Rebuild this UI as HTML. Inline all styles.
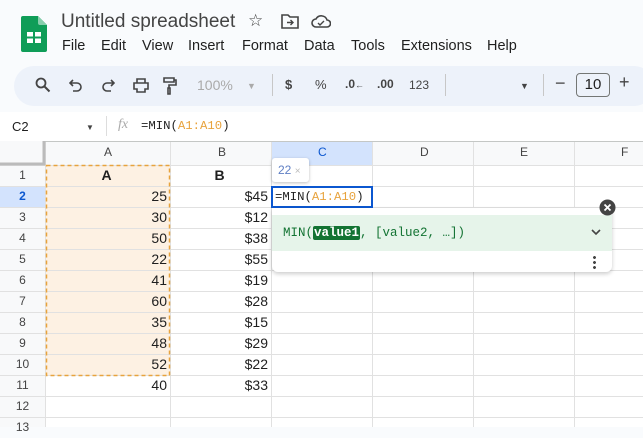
<!DOCTYPE html>
<html><head><style>
*{box-sizing:border-box;margin:0;padding:0}
body{width:643px;height:427px;overflow:hidden;background:#f9fbfd;font-family:"Liberation Sans",Arial,sans-serif;position:relative;color:#1f1f1f}
.a{position:absolute}
.menu span{position:absolute;top:0}
.tb{left:14px;top:66px;width:640px;height:40px;background:#edf2fa;border-radius:20px}
.ti{position:absolute;top:77px;font-size:14px;color:#444}
.grid{left:0;top:141px;width:643px;height:286px;background:#fff}
.mono{font-family:"Liberation Mono",monospace}
</style></head><body>
<svg class="a" style="left:21px;top:16px" width="26" height="36" viewBox="0 0 26 36"><path d="M2 0h15l9 9v25a2 2 0 0 1-2 2H2a2 2 0 0 1-2-2V2a2 2 0 0 1 2-2z" fill="#0f9d58"/><path d="M17 0l9 9h-7a2 2 0 0 1-2-2z" fill="#87ceac"/><rect x="6" y="16" width="14" height="11" fill="#fff"/><path d="M6 21.5h14M13 16v11" stroke="#0f9d58" stroke-width="2"/></svg>
<div class="a" style="left:61px;top:11px;font-size:19px;color:#444">Untitled spreadsheet</div>
<div class="a" style="left:248px;top:11px;font-size:17px;color:#444">☆</div>
<svg class="a" style="left:281px;top:14px" width="18" height="15" viewBox="0 0 18 15"><path d="M1 1h6l2 2h8v11H1z" fill="none" stroke="#444" stroke-width="1.6"/><path d="M6 8.5h6M9.5 6l2.5 2.5L9.5 11" fill="none" stroke="#444" stroke-width="1.4"/></svg>
<svg class="a" style="left:311px;top:14px" width="20" height="15" viewBox="0 0 20 15"><path d="M5 13a4 4 0 0 1 0-8 6 6 0 0 1 11 1 3.5 3.5 0 0 1 0 7z" fill="none" stroke="#444" stroke-width="1.6"/><path d="M7 9l2 2 4-4" fill="none" stroke="#444" stroke-width="1.4"/></svg>
<div class="a menu" style="left:0;top:38px;font-size:14.5px;color:#1f1f1f;white-space:nowrap"><span style="left:62px">File</span><span style="left:101px">Edit</span><span style="left:142px">View</span><span style="left:188px">Insert</span><span style="left:242px">Format</span><span style="left:304px">Data</span><span style="left:351px">Tools</span><span style="left:401px">Extensions</span><span style="left:487px">Help</span></div>
<div class="a tb"></div>
<svg class="a" style="left:35px;top:77px" width="16" height="16" viewBox="0 0 16 16"><circle cx="6" cy="6" r="4.5" fill="none" stroke="#444" stroke-width="1.8"/><path d="M9.5 9.5l5 5" stroke="#444" stroke-width="2"/></svg>
<svg class="a" style="left:69px;top:79px" width="14" height="14" viewBox="0 0 14 14"><path d="M4 1L1 4l3 3M1 4h7a4 4 0 0 1 0 8H4" fill="none" stroke="#444" stroke-width="1.6"/></svg>
<svg class="a" style="left:101px;top:79px" width="14" height="14" viewBox="0 0 14 14"><path d="M10 1l3 3-3 3M13 4H6a4 4 0 0 0 0 8h4" fill="none" stroke="#444" stroke-width="1.6"/></svg>
<svg class="a" style="left:133px;top:78px" width="16" height="15" viewBox="0 0 16 15"><path d="M4 1h8v4H4zM1 5h14v6h-3v3H4v-3H1z" fill="none" stroke="#444" stroke-width="1.6"/></svg>
<svg class="a" style="left:163px;top:77px" width="14" height="18" viewBox="0 0 14 18"><path d="M1 1h10v4H1zM11 3h2v5H6v3M5 11h2v6H5z" fill="none" stroke="#444" stroke-width="1.6"/></svg>
<div class="ti" style="left:197px;color:#aaa">100%</div><div class="ti" style="left:247px;color:#aaa;font-size:9px;top:81px">▼</div>
<div class="a" style="left:272px;top:74px;width:1px;height:22px;background:#c7c7c7"></div>
<div class="ti" style="left:285px;font-weight:bold;font-size:13px">$</div>
<div class="ti" style="left:315px;font-size:13px">%</div>
<div class="ti" style="left:345px;font-size:12px;font-weight:bold">.0<span style="font-size:9px">←</span></div>
<div class="ti" style="left:377px;font-size:12px;font-weight:bold">.00</div>
<div class="ti" style="left:409px;font-size:12px;top:78px">123</div>
<div class="a" style="left:445px;top:74px;width:1px;height:22px;background:#c7c7c7"></div>
<div class="ti" style="left:520px;font-size:9px;top:81px">▼</div>
<div class="a" style="left:543px;top:74px;width:1px;height:22px;background:#c7c7c7"></div>
<div class="ti" style="left:555px;font-size:18px;top:73px">−</div>
<div class="a" style="left:576px;top:73px;width:34px;height:24px;border:1px solid #747775;border-radius:4px;font-size:15px;text-align:center;line-height:22px">10</div>
<div class="ti" style="left:619px;font-size:18px;top:72px">+</div>
<div class="a" style="left:0;top:112px;width:643px;height:29px;background:#fff"></div>
<div class="a" style="left:12px;top:119px;font-size:13px">C2</div>
<div class="a" style="left:86px;top:123px;font-size:8px;color:#444">▼</div>
<div class="a" style="left:106px;top:116px;width:1px;height:20px;background:#ddd"></div>
<div class="a" style="left:118px;top:117px;font-size:14px;color:#aaa;font-style:italic;font-family:'Liberation Serif',serif">fx</div>
<div class="a mono" style="left:141px;top:119px;font-size:12.3px">=MIN(<span style="color:#e8a33d">A1:A10</span>)</div>
<div class="a grid"></div>
<svg class="a" style="left:0;top:141px" width="643" height="286">
<rect x="0" y="0" width="643" height="24" fill="#f8f9fa"/>
<rect x="0" y="24" width="45" height="262" fill="#f8f9fa"/>
<rect x="272" y="0" width="100" height="24" fill="#d3e3fd"/>
<rect x="0" y="45" width="45" height="21" fill="#d3e3fd"/>
<rect x="46" y="24" width="124" height="210" fill="#fdf1e3"/>
<g stroke="#e1e1e1" stroke-width="1">
<path d="M45.5 0V286M170.5 0V286M271.5 0V286M372.5 0V286M473.5 0V286M574.5 0V286"/>
<path d="M0 24.5H643M0 45.5H643M0 66.5H643M0 87.5H643M0 108.5H643M0 129.5H643M0 150.5H643M0 171.5H643M0 192.5H643M0 213.5H643M0 234.5H643M0 255.5H643M0 276.5H643"/>
</g>
<path d="M0 0.5H643" stroke="#c4c7c5"/>
<rect x="0" y="0" width="45" height="24" fill="#f8f9fa"/>
<path d="M44 0v24M0 23h45" stroke="#bbb" stroke-width="3"/>
<rect x="46.5" y="24.5" width="123" height="210" fill="none" stroke="#e8a33d" stroke-width="1.5" stroke-dasharray="4 3"/>
</svg>
<div class="a" style="top:145px;left:0;width:643px;font-size:12px;color:#444">
<span class="a" style="left:104px">A</span><span class="a" style="left:218px">B</span><span class="a" style="left:318px;color:#0b57d0">C</span><span class="a" style="left:420px">D</span><span class="a" style="left:520px">E</span><span class="a" style="left:621px">F</span></div>
<div class="a" style="left:0;top:165px;width:45px;font-size:12px;color:#444;text-align:center;line-height:21px">1<br><b style="color:#0b57d0">2</b><br>3<br>4<br>5<br>6<br>7<br>8<br>9<br>10<br>11<br>12<br>13</div>
<div class="a" style="left:46px;top:165px;width:121px;font-size:14px;text-align:right;line-height:21px"><b style="display:block;text-align:center">A</b>25<br>30<br>50<br>22<br>41<br>60<br>35<br>48<br>52<br>40</div>
<div class="a" style="left:171px;top:165px;width:97px;font-size:14px;text-align:right;line-height:21px"><b style="display:block;text-align:center">B</b>$45<br>$12<br>$38<br>$55<br>$19<br>$28<br>$15<br>$29<br>$22<br>$33</div>
<div class="a" style="left:272px;top:158px;width:37px;height:24px;background:#fff;border-radius:3px;box-shadow:0 1px 3px rgba(0,0,0,.25);font-size:12px;color:#5f7fc4;padding:5px 6px">22 <span style="color:#bbb;font-size:10px">×</span></div>
<div class="a mono" style="left:271px;top:186px;width:102px;height:22px;border:2px solid #0b57d0;background:#fff;font-size:12.3px;padding:1px 2px;line-height:17px">=MIN(<span style="color:#e8a33d">A1:A10</span>)</div>
<div class="a" style="left:272px;top:208px;width:340px;height:64px;background:#fff;box-shadow:0 2px 4px rgba(0,0,0,.2);border-radius:0 0 6px 6px"></div>
<div class="a" style="left:272px;top:215px;width:340px;height:36px;background:#e6f4ea"></div>
<div class="a mono" style="left:283px;top:226px;font-size:12.5px;color:#137333">MIN(<span style="background:#137333;color:#fff;font-weight:bold;border-radius:2px;padding:0 1px">value1</span>, [value2, …])</div>
<svg class="a" style="left:590px;top:227px" width="12" height="10"><path d="M2 3l4 4 4-4" fill="none" stroke="#444" stroke-width="1.6"/></svg>
<div class="a" style="left:593px;top:255px;width:3px;height:14px;background:radial-gradient(circle,#444 1.3px,transparent 1.6px) 0 0/3px 5px"></div>
<svg class="a" style="left:599px;top:199px" width="17" height="17"><circle cx="8.5" cy="8.5" r="8" fill="#444"/><path d="M5.5 5.5l6 6M11.5 5.5l-6 6" stroke="#fff" stroke-width="1.8"/></svg>
</body></html>
